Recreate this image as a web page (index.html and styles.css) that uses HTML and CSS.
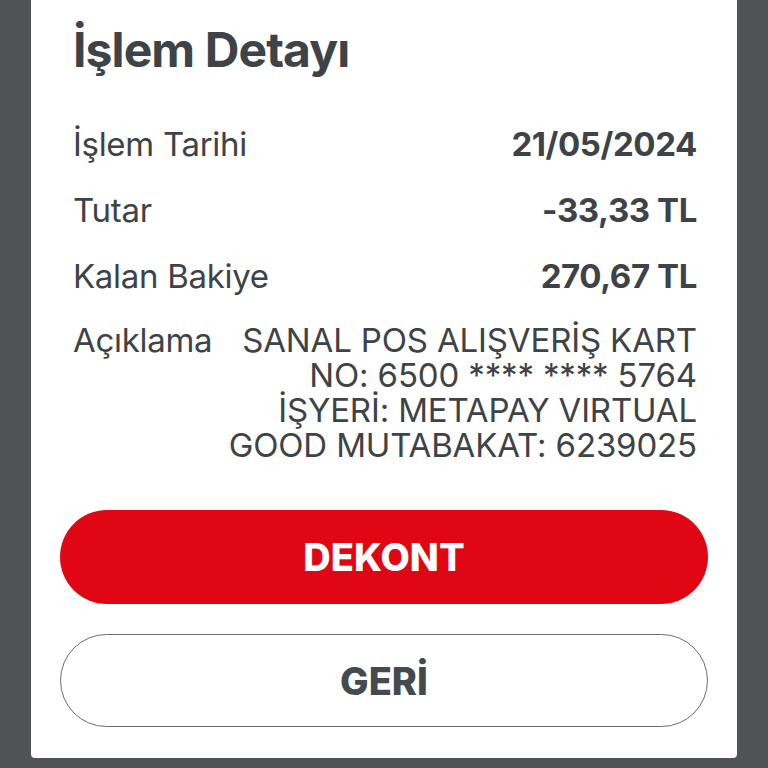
FILE: index.html
```html
<!DOCTYPE html>
<html lang="tr">
<head>
<meta charset="utf-8">
<title>İşlem Detayı</title>
<link rel="stylesheet" href="styles.css">
</head>
<body>
<div class="card">
  <div class="content">
    <h1 class="title">İşlem Detayı</h1>
    <div class="row">
      <span class="label">İşlem Tarihi</span>
      <span class="value">21/05/2024</span>
    </div>
    <div class="row">
      <span class="label">Tutar</span>
      <span class="value">-33,33 TL</span>
    </div>
    <div class="row">
      <span class="label">Kalan Bakiye</span>
      <span class="value">270,67 TL</span>
    </div>
    <div class="row desc-row">
      <span class="label">Açıklama</span>
      <div class="desc">
        <div class="desc-line">SANAL POS ALIŞVERİŞ KART</div>
        <div class="desc-line">NO: 6500 **** **** 5764</div>
        <div class="desc-line">İŞYERİ: METAPAY VIRTUAL</div>
        <div class="desc-line">GOOD MUTABAKAT: 6239025</div>
      </div>
    </div>
  </div>
  <button class="btn btn-primary">DEKONT</button>
  <button class="btn btn-secondary">GERİ</button>
</div>
</body>
</html>
```
FILE: styles.css
```css
html, body {
  margin: 0;
  padding: 0;
}
body {
  background: #4f5356;
  height: 768px;
  overflow: hidden;
  font-family: Inter, "Open Sans", sans-serif;
  color: #3d4347;
}
.card {
  background: #ffffff;
  margin: 0 31px;
  border-radius: 0 0 4px 4px;
  padding: 0 29px 31px;
  display: flex;
  flex-direction: column;
}
.content {
  padding: 0 11px 0 13px;
}
.title {
  margin: 0;
  padding-top: 22px;
  font-size: 48px;
  line-height: 56px;
  font-weight: 700;
  letter-spacing: -0.9px;
}
.row {
  display: flex;
  justify-content: space-between;
  align-items: flex-start;
  font-size: 33px;
  line-height: 66px;
  white-space: nowrap;
}
.label {
  letter-spacing: -0.3px;
}
.title + .row {
  margin-top: 33px;
}
.value {
  font-weight: 700;
  letter-spacing: -0.4px;
}
.desc-row {
  line-height: 35px;
  margin-top: 14px;
}
.desc {
  text-align: right;
  letter-spacing: -0.15px;
}
.btn {
  display: block;
  width: 100%;
  border-radius: 48px;
  font-family: Inter, "Open Sans", sans-serif;
  font-weight: 800;
  font-size: 38px;
  padding: 0;
  cursor: pointer;
}
.btn-primary {
  margin-top: 47px;
  height: 94px;
  background: #e10613;
  color: #ffffff;
  border: none;
}
.btn-secondary {
  margin-top: 30px;
  height: 93px;
  background: #ffffff;
  color: #444a4e;
  border: 1.5px solid #6a6d70;
}
```
